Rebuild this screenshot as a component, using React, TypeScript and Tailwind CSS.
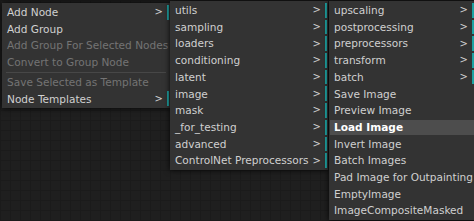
import React from "react";

type Item = { label: string; sub?: boolean; disabled?: boolean; sep?: boolean; active?: boolean };

const menu1: Item[] = [
  { label: "Add Node", sub: true },
  { label: "Add Group" },
  { label: "Add Group For Selected Nodes", disabled: true },
  { label: "Convert to Group Node", disabled: true },
  { label: "", sep: true },
  { label: "Save Selected as Template", disabled: true },
  { label: "Node Templates", sub: true },
];

const menu2: Item[] = [
  "utils",
  "sampling",
  "loaders",
  "conditioning",
  "latent",
  "image",
  "mask",
  "_for_testing",
  "advanced",
  "ControlNet Preprocessors",
].map((l) => ({ label: l, sub: true }));

const menu3: Item[] = [
  { label: "upscaling", sub: true },
  { label: "postprocessing", sub: true },
  { label: "preprocessors", sub: true },
  { label: "transform", sub: true },
  { label: "batch", sub: true },
  { label: "Save Image" },
  { label: "Preview Image" },
  { label: "Load Image", active: true },
  { label: "Invert Image" },
  { label: "Batch Images" },
  { label: "Pad Image for Outpainting" },
  { label: "EmptyImage" },
  { label: "ImageCompositeMasked" },
];

function Entry({ item }: { item: Item }) {
  if (item.sep) {
    return <div className="mx-[3px] my-[1px] h-[1px] bg-[#474747]" />;
  }
  return (
    <div
      className={
        "my-[1px] flex h-[14.7px] items-center pl-[4px] pr-[4px] leading-none whitespace-nowrap " +
        (item.sub ? "border-r-2 border-[#1fa3a3] " : "border-r-2 border-transparent ") +
        (item.active ? "bg-[#4d4d4d] text-white font-semibold " : "") +
        (item.disabled ? "text-[#747474]" : item.active ? "" : "text-[#d0d0d0]")
      }
    >
      <span className="flex-1">{item.label}</span>
      {item.sub && <span className="text-[#cfcfcf] text-[10px]">&gt;</span>}
    </div>
  );
}

function Menu({ items, className }: { items: Item[]; className: string }) {
  return (
    <div className={"absolute flex flex-col bg-[#333333] px-[1px] py-[1px] shadow-[0_0_6px_rgba(0,0,0,0.9)] " + className}>
      {items.map((it, i) => (
        <Entry key={i} item={it} />
      ))}
    </div>
  );
}

export default function App() {
  return (
    <div className="relative h-[221px] w-[474px] overflow-hidden bg-[#1f1f1f] bg-[linear-gradient(#1b1b1b_1px,transparent_1px),linear-gradient(90deg,#1b1b1b_1px,transparent_1px)] bg-[size:10px_10px] font-['DejaVu_Sans',sans-serif] text-[10.55px]">
      <Menu items={menu1} className="left-[2px] top-[3px] w-[168px]" />
      <Menu items={menu2} className="left-[170px] top-[1px] w-[158px]" />
      <Menu items={menu3} className="left-[329px] top-[1px] w-[146px]" />
    </div>
  );
}
